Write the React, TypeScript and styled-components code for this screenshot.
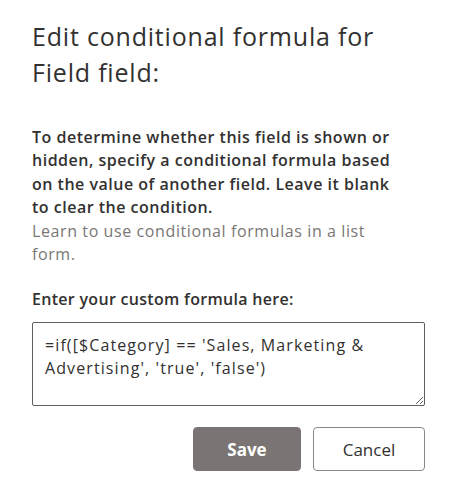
import styled, { createGlobalStyle } from "styled-components";

const GlobalStyle = createGlobalStyle`
  html, body {
    margin: 0;
    padding: 0;
    background: #ffffff;
  }
  body {
    font-family: "Open Sans", "Noto Sans", "Liberation Sans", sans-serif;
    color: #323130;
  }
`;

function App() {
  return (
    <>
      <GlobalStyle />
      <Panel>
        <Title>Edit conditional formula for Field field:</Title>
        <Description>
          To determine whether this field is shown or hidden, specify a
          conditional formula based on the value of another field. Leave it
          blank to clear the condition.
          <LearnLink href="#">
            Learn to use conditional formulas in a list form.
          </LearnLink>
        </Description>
        <Label htmlFor="formula">Enter your custom formula here:</Label>
        <FormulaBox
          id="formula"
          defaultValue="=if([$Category] == 'Sales, Marketing & Advertising', 'true', 'false')"
        />
        <Actions>
          <Button $primary>Save</Button>
          <Button>Cancel</Button>
        </Actions>
      </Panel>
    </>
  );
}

const Panel = styled.div`
  box-sizing: border-box;
  width: 449px;
  padding: 18px 24px 28px 32px;
  display: flex;
  flex-direction: column;
`;

const Title = styled.h1`
  margin: 0;
  width: 370px;
  font-size: 25px;
  font-weight: 400;
  letter-spacing: 0.8px;
  line-height: 36px;
  color: #323130;
`;

const Description = styled.p`
  margin: 36px 0 0;
  width: 372px;
  font-size: 16px;
  font-weight: 600;
  letter-spacing: 0.5px;
  line-height: 23.4px;
  color: #323130;
`;

const LearnLink = styled.a`
  display: block;
  font-weight: 400;
  letter-spacing: 0.6px;
  color: #797775;
  text-decoration: none;
`;

const Label = styled.label`
  margin-top: 22px;
  font-size: 16px;
  font-weight: 600;
  letter-spacing: 0.3px;
  line-height: 22px;
  color: #323130;
`;

const FormulaBox = styled.textarea`
  box-sizing: border-box;
  margin-top: 12px;
  width: 393px;
  height: 84px;
  padding: 11px 12px 9px;
  border: 1px solid #605e5c;
  border-radius: 2px;
  font-family: "Open Sans", "Noto Sans", "Liberation Sans", sans-serif;
  font-size: 16px;
  letter-spacing: 1.1px;
  line-height: 23px;
  color: #323130;
  resize: vertical;
  outline: none;
`;

const Actions = styled.div`
  display: flex;
  justify-content: flex-end;
  gap: 12px;
  margin-top: 21px;
`;

const Button = styled.button<{ $primary?: boolean }>`
  box-sizing: border-box;
  height: 44px;
  min-width: ${(p) => (p.$primary ? "108px" : "112px")};
  padding: 0 20px;
  border-radius: 4px;
  border: 1px solid ${(p) => (p.$primary ? "#7a7574" : "#8a8886")};
  background: ${(p) => (p.$primary ? "#7a7574" : "#ffffff")};
  color: ${(p) => (p.$primary ? "#ffffff" : "#323130")};
  font-family: "Open Sans", "Noto Sans", "Liberation Sans", sans-serif;
  font-size: 17px;
  font-weight: ${(p) => (p.$primary ? 700 : 400)};
  cursor: pointer;
`;

export default App;
